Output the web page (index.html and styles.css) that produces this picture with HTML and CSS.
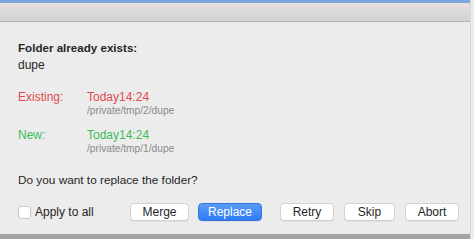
FILE: index.html
```html
<!DOCTYPE html>
<html lang="en">
<head>
    <meta charset="UTF-8">
    <title>Folder already exists</title>
    <link rel="stylesheet" href="styles.css">
</head>
<body>
    <div class="window">
        <div class="accent"></div>
        <div class="titlebar"></div>

        <div class="content">
            <!-- heading -->
            <div class="title">Folder already exists:</div>
            <div class="name">dupe</div>

            <!-- existing / new info -->
            <div class="info existing">
                <div class="label">Existing:</div>
                <div class="detail">
                    <div class="when">Today14:24</div>
                    <div class="path">/private/tmp/2/dupe</div>
                </div>
            </div>
            <div class="info new">
                <div class="label">New:</div>
                <div class="detail">
                    <div class="when">Today14:24</div>
                    <div class="path">/private/tmp/1/dupe</div>
                </div>
            </div>

            <div class="question">Do you want to replace the folder?</div>

            <!-- buttons -->
            <div class="actions">
                <label class="apply"><span class="checkbox"></span>Apply to all</label>
                <button class="btn merge">Merge</button>
                <button class="btn primary replace">Replace</button>
                <button class="btn retry">Retry</button>
                <button class="btn skip">Skip</button>
                <button class="btn abort">Abort</button>
            </div>
        </div>
        <div class="bottom"></div>
    </div>
</body>
</html>
```

FILE: styles.css
```css
* {
    margin: 0;
    padding: 0;
    box-sizing: border-box;
}

body {
    font-family: "Liberation Sans", Arial, sans-serif;
    background-color: #ececec;
    color: #262626;
    width: 474px;
    height: 239px;
    overflow: hidden;
}

.window {
    display: flex;
    flex-direction: column;
    height: 239px;
    border-right: 1px solid #d6d6d6;
    margin-right: 3px;
}

.accent {
    height: 3px;
    background-color: #7ea7dc;
}

.titlebar {
    height: 19px;
    background: linear-gradient(#e6e1e3, #d2d2d2);
    border-bottom: 1px solid #b4b4b4;
}

.content {
    flex: 1;
    padding: 18px 0 0 18px;
}

.title {
    font-size: 11.6px;
    font-weight: bold;
    line-height: 15px;
}

.name {
    font-size: 12px;
    line-height: 15px;
    margin-top: 3px;
}

.info {
    display: flex;
    margin-top: 17px;
}

.info.new {
    margin-top: 11px;
}

.label {
    width: 69px;
    font-size: 12px;
    line-height: 15px;
}

.when {
    font-size: 12px;
    line-height: 15px;
}

.path {
    font-size: 10.2px;
    line-height: 12px;
    color: #8a8a8a;
}

.existing .label,
.existing .when {
    color: #e04a4f;
}

.new .label,
.new .when {
    color: #3cbb58;
}

.question {
    font-size: 11.8px;
    line-height: 15px;
    margin-top: 18px;
}

.actions {
    display: flex;
    align-items: center;
    margin-top: 15px;
}

.apply {
    display: flex;
    align-items: center;
    width: 112px;
    font-size: 12px;
}

.checkbox {
    width: 13px;
    height: 13px;
    background-color: #fff;
    border: 1px solid #c8c8c8;
    border-radius: 3px;
    margin-right: 4px;
}

.btn {
    height: 18px;
    font-family: inherit;
    font-size: 12px;
    color: #262626;
    background-color: #fff;
    border: 1px solid #d2d2d2;
    border-radius: 4px;
    box-shadow: 0 1px 0 rgba(0, 0, 0, 0.06);
}

.merge {
    width: 59px;
}

.replace {
    width: 64px;
    margin-left: 9px;
}

.retry {
    width: 54px;
    margin-left: 18px;
}

.skip {
    width: 51px;
    margin-left: 10px;
}

.abort {
    width: 54px;
    margin-left: 10px;
}

.primary {
    color: #fff;
    background: linear-gradient(#5a9cf8, #2f7cf6);
    border-color: #2f74e0;
}

.bottom {
    height: 5px;
    background-color: #a5a5a5;
}
```
